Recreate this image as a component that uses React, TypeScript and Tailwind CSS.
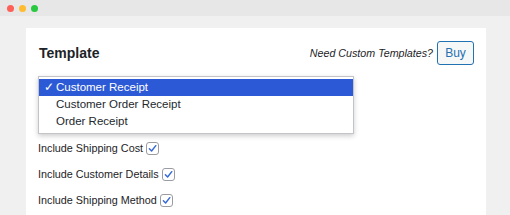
import React from "react";

function Check() {
  return (
    <span className="inline-flex items-center justify-center w-[13px] h-[13px] rounded-[3px] border border-[#9a9ca1] bg-white ml-[3px]">
      <svg width="11" height="11" viewBox="0 0 12 12">
        <path d="M2.6 6.3 L5 8.7 L9.6 2.9" fill="none" stroke="#3669d6" strokeWidth="1.6" strokeLinecap="round" strokeLinejoin="round" />
      </svg>
    </span>
  );
}

export default function App() {
  const font = { fontFamily: '"Liberation Sans", Arial, sans-serif' };
  return (
    <div className="w-[510px] h-[215px] bg-[#f0f0f1] overflow-hidden flex flex-col" style={font}>
      <div className="h-[16px] bg-[#e7e7e7] flex items-center gap-[5px] pl-[7px] shrink-0">
        <span className="w-[7px] h-[7px] rounded-full bg-[#fe5f57]" />
        <span className="w-[7px] h-[7px] rounded-full bg-[#febc2e]" />
        <span className="w-[7px] h-[7px] rounded-full bg-[#28c840]" />
      </div>
      <div className="flex-1 pt-[12px] pl-[26px] pr-[24px]">
        <div className="bg-white h-full pl-[12px] pr-[12px] pt-[13px]">
          <div className="flex items-center justify-between h-[24px]">
            <div className="text-[14px] font-bold text-[#1d2327] pl-[1px]">Template</div>
            <div className="flex items-center gap-[4px]">
              <span className="text-[10.7px] italic text-[#1d2327]">Need Custom Templates?</span>
              <button className="h-[24px] w-[37px] text-[12px] text-[#2271b1] border border-[#2271b1] rounded-[3px] bg-[#f6f7f7]">Buy</button>
            </div>
          </div>
          <div className="mt-[11px] w-[316px] border border-[#c3c4c7] shadow-[0_2px_5px_rgba(0,0,0,0.2)] bg-white pt-[2px] pb-[3px] text-[11.5px] text-[#23282d]">
            <div className="h-[17px] bg-[#2c5ad6] text-white flex items-center pl-[5px]">
              <span className="w-[12px]">✓</span>Customer Receipt
            </div>
            <div className="h-[17px] flex items-center pl-[17px]">Customer Order Receipt</div>
            <div className="h-[17px] flex items-center pl-[17px]">Order Receipt</div>
          </div>
          <div className="mt-[7px] flex flex-col gap-[11px] text-[10.8px] text-[#1d2327]">
            <div className="flex items-center h-[15px]">Include Shipping Cost<Check /></div>
            <div className="flex items-center h-[15px]">Include Customer Details<Check /></div>
            <div className="flex items-center h-[15px]">Include Shipping Method<Check /></div>
          </div>
        </div>
      </div>
    </div>
  );
}
